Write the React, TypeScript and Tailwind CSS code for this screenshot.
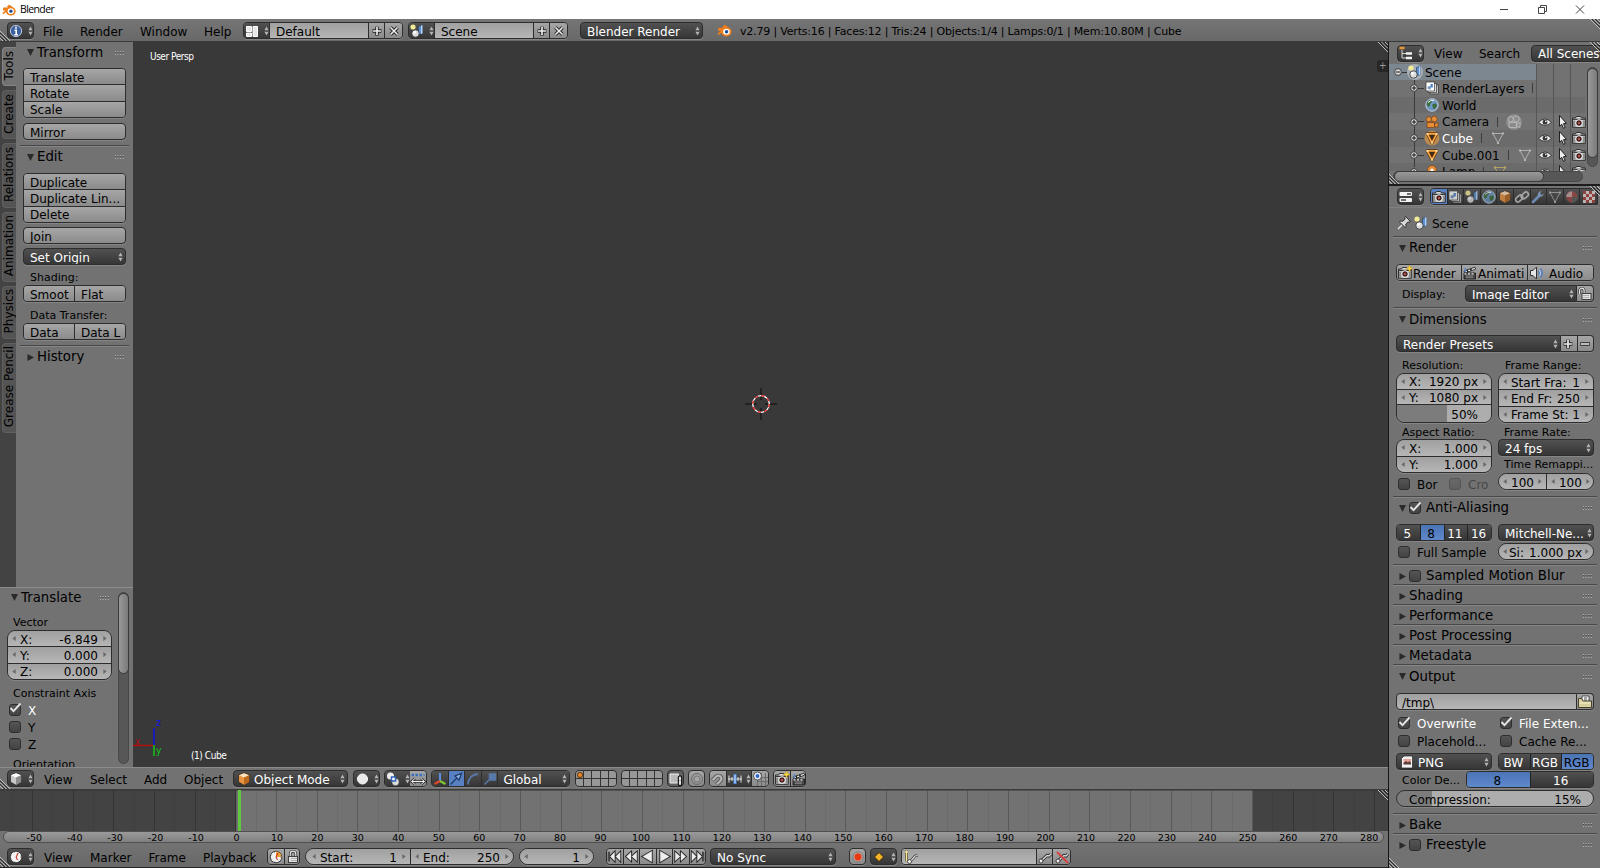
import type { ReactNode } from 'react';
import clsx from 'clsx';

const LIGHT = 'bg-linear-to-b from-[#a6a6a6] to-[#8b8b8b]';
const DARK = 'bg-linear-to-b from-[#515151] to-[#363636] text-white';
const FIELD = 'bg-linear-to-b from-[#a0a0a0] to-[#b6b6b6]';
const BOX = 'border border-[#2d2d2d] shadow-[0_1px_0_#858585]';

/* ---------- icons ---------- */

function Svg({ children, className = 'size-4' }: { children: ReactNode; className?: string }) {
  return (
    <svg viewBox="0 0 16 16" fill="none" className={clsx('shrink-0', className)}>
      {children}
    </svg>
  );
}

const BlenderLogo = ({ className = 'size-[14px]' }: { className?: string }) => (
  <Svg className={className}>
    <path d="M1 12.2 6.6 7.6H2.2V6h7L7 4.2 8.4 3l5.2 4.2" stroke="#ee7d1b" strokeWidth="2" strokeLinejoin="round" />
    <ellipse cx="10" cy="9.4" rx="5.6" ry="4.9" fill="#ee7d1b" />
    <ellipse cx="10.1" cy="9.3" rx="3.6" ry="3.2" fill="#fff" />
    <circle cx="10.2" cy="9.3" r="1.9" fill="#1f4f8f" />
  </Svg>
);

const Arrows = () => (
  <svg viewBox="0 0 6 12" className="h-3 w-[5px] shrink-0 fill-[#b4b4b4]">
    <path d="M3 .5 5.5 5h-5zM3 11.5.5 7h5z" />
  </svg>
);

const InfoIcon = () => (
  <Svg>
    <circle cx="8" cy="8" r="5.6" fill="#3b5f9c" stroke="#b9c9e2" />
    <path d="M8 3.800v2M6.500 7.200H8.200V11.500M6.300 11.700h3.600" stroke="#fff" strokeWidth="1.600" />
  </Svg>
);

const ScreenIcon = () => (
  <Svg>
    <path d="M2.500 3.500h5v5h-5zM2.500 10h5v3.500h-5zM9 3.500h4.500v10H9z" fill="#e6e6e6" stroke="#fff" />
  </Svg>
);

const SceneIcon = () => (
  <Svg>
    <circle cx="4" cy="4" r="2.600" fill="#f4eb98" />
    <path d="M9.500 3.500 13.500 2v8.500l-4 1z" fill="#5d8fd0" stroke="#23364f" strokeWidth=".6" />
    <path d="M12 2.500 13.500 2v8.500l-1.500.5z" fill="#b7d2f4" />
    <circle cx="6.500" cy="10.500" r="3.700" fill="#dcdcdc" stroke="#333" strokeWidth=".8" />
    <circle cx="5.500" cy="9.300" r="1.400" fill="#fff" />
  </Svg>
);

const CubeIcon = ({ color = 'white' }: { color?: 'white' | 'orange' }) => (
  <Svg>
    <path d="M8 1.800 13.500 4v7L8 14.200 2.500 11V4z" fill={color === 'orange' ? '#e79543' : '#c9c9c9'} stroke="#222" strokeWidth=".7" />
    <path d="M8 2.200 13 4.200 8 6.500 3 4.200z" fill={color === 'orange' ? '#ffe3bd' : '#fff'} />
    <path d="M8 6.500 13.200 4.300v6.600L8 13.800z" fill={color === 'orange' ? '#b96a20' : '#8c8c8c'} />
  </Svg>
);

const ClockIcon = ({ slice = false }: { slice?: boolean }) => (
  <Svg>
    <circle cx="8" cy="8" r="5.800" fill="#f2f2f2" stroke="#333" strokeWidth=".9" />
    {slice && <path d="M8 8V2.500A5.500 5.500 0 0 1 13.500 8z" fill="#f3a32c" />}
    <path d="M8 8.500 10 4M8 8l1.500 3" stroke="#c8372d" strokeWidth="1.100" />
    <circle cx="8" cy="8" r="4.800" stroke="#888" strokeWidth=".8" strokeDasharray="1 3" />
  </Svg>
);

const TreeIcon = () => (
  <Svg>
    <path d="M1.500 3h5" stroke="#e8923a" strokeWidth="2.600" />
    <path d="M4 5v8h4M4 8.500h4" stroke="#d8d8d8" />
    <path d="M8 8.500h6M8 13h6" stroke="#f2f2f2" strokeWidth="2.400" />
  </Svg>
);

const PropsIcon = () => (
  <Svg>
    <rect x="1.500" y="3" width="12.500" height="4" rx="1" fill="#f2f2f2" />
    <rect x="1.500" y="9" width="12.500" height="4" rx="1" fill="#f2f2f2" />
    <path d="M9 5h4M3 11h5" stroke="#444" strokeWidth="1.400" />
  </Svg>
);

const PhotoCam = ({ star = false }: { star?: boolean }) => (
  <Svg>
    <path d="M1.500 4h3l1-1.500h4l1 1.500h3.800v9.300H1.500z" fill="#dcdcdc" stroke="#222" strokeWidth=".9" />
    <path d="M2 5.300h12.300" stroke="#333" strokeWidth="1.200" />
    <path d="M2 6.500h2.500v6.300H2zM11.500 6.500H14v6.300h-2.500z" fill="#8c8c8c" />
    <circle cx="8" cy="9" r="3.300" fill="#3c2020" stroke="#fff" strokeWidth="1" />
    <circle cx="8" cy="9" r="1.200" fill="#c05248" />
    {star && <path d="m12.500 0 1 2.500L16 3.500l-2.500 1-1 2.500-1-2.500L9 3.500l2.500-1z" fill="#ffd93b" stroke="#c28d12" strokeWidth=".4" />}
  </Svg>
);

const Clapper = () => (
  <Svg>
    <path d="M2 8h11.500v6H2z" fill="#4a4a4a" stroke="#111" strokeWidth=".8" />
    <path d="m2 6 11-3.800.6 2L3 8z" fill="#eee" stroke="#111" strokeWidth=".8" />
    <path d="m5 5 1 1.800M8.500 3.800l1 1.800" stroke="#111" strokeWidth="1.400" />
    <path d="M2.500 8.800H13" stroke="#eee" strokeWidth="1.300" strokeDasharray="2 1.500" />
    <path d="M4 11h7M4 12.700h7" stroke="#aaa" strokeWidth=".6" />
    <path d="M3.300 3v4" stroke="#5a8bd0" strokeWidth="1.600" />
  </Svg>
);

const LayersIcon = () => (
  <Svg>
    <path d="M6 5h8.500v9H6z" fill="#bbb" stroke="#333" strokeWidth=".7" />
    <path d="M4 3.500h8.500v9H4z" fill="#ddd" stroke="#333" strokeWidth=".7" />
    <path d="M2 2h8.500v9H2z" fill="#fff" stroke="#333" strokeWidth=".7" />
    <path d="M6.500 4h2.300v3.500H6.500z" fill="#4a7fca" />
    <circle cx="5.300" cy="7.800" r="1.800" fill="#7799c4" />
  </Svg>
);

const WorldIcon = () => (
  <Svg>
    <circle cx="8" cy="8" r="6.200" fill="#6f97c4" stroke="#c5d3e2" strokeWidth="1" />
    <path d="M4 4c2-1.500 4-1 4 .5S5.500 6.500 6 8 4 10 3 8.500 3 5.500 4 4zM9 7c2-1 4-.5 4 1s-1.500 4-3 4-1-2-1.500-3 0-1.700.5-2z" fill="#3d6d3c" />
    <path d="M4 5.500q3-3 6-2" stroke="#e6eef8" strokeWidth="1" />
  </Svg>
);

const LinkIcon = () => (
  <Svg>
    <g stroke="#c4c4c4" strokeWidth="1.700">
      <rect x="1.200" y="7.200" width="8" height="4.600" rx="2.300" transform="rotate(-42 5.200 9.500)" />
      <rect x="6.800" y="4.200" width="8" height="4.600" rx="2.300" transform="rotate(-42 10.800 6.500)" />
    </g>
  </Svg>
);

const WrenchIcon = () => (
  <Svg>
    <path d="m3 13 6-6" stroke="#7fa4d8" strokeWidth="2.800" strokeLinecap="round" />
    <path d="M13.800 4.500 11.500 6 10 4.500 11.500 2.200A3.300 3.300 0 0 0 8 6.500 3.300 3.300 0 0 0 13.800 4.500z" fill="#8fb1e0" />
  </Svg>
);

const MeshTri = ({ color = '#b5b5b5' }: { color?: string }) => (
  <Svg>
    <path d="M3 3.500h10L8 13z" stroke={color} strokeWidth=".9" />
    <path d="M2 2.500h2v2H2zM12 2.500h2v2h-2zM7 12h2v2H7z" fill={color} />
  </Svg>
);

const ObjTri = ({ active = false }: { active?: boolean }) => (
  <Svg>
    {active && <circle cx="8" cy="8" r="7.500" fill="#b98b4f" />}
    <path d="M3.300 3.800h9.400L8 12.800z" fill="#3a2a18" stroke="#5c2f06" strokeWidth="3" strokeLinejoin="round" />
    <path d="M3.300 3.800h9.400L8 12.800z" stroke="#f6a849" strokeWidth="1.700" strokeLinejoin="round" />
    <path d="M2.500 3h2v2h-2zM11.500 3h2v2h-2zM7 11.500h2v2H7z" fill="#ffd9a0" />
  </Svg>
);

const MaterialIcon = () => (
  <Svg>
    <circle cx="8" cy="8" r="5.800" fill="#a04844" stroke="#555" strokeWidth=".7" />
    <path d="M8 2.200a5.800 5.800 0 0 0-5.800 5.800H8z" fill="#c9a5a2" />
    <path d="M8 8h5.800A5.800 5.800 0 0 1 8 13.800z" fill="#5c5c5c" />
  </Svg>
);

const TextureIcon = () => (
  <Svg>
    <rect x="2" y="2" width="12" height="12" fill="#e8dada" />
    {[0, 1, 2, 3].map((r) =>
      [0, 1].map((c) => <rect key={`${r}${c}`} x={2 + c * 6 + (r % 2) * 3} y={2 + r * 3} width="3" height="3" fill="#a8433c" />)
    )}
  </Svg>
);

const VideoCam = ({ dim = false }: { dim?: boolean }) => (
  <Svg>
    {dim && <circle cx="8" cy="8" r="7.300" fill="#8c8c8c" stroke="#a5a5a5" strokeWidth=".6" />}
    <g fill={dim ? '#8c8c8c' : '#e58d3a'} stroke={dim ? '#c6c6c6' : '#7c3f08'} strokeWidth=".7">
      <path d="M3 8.500h7.500v5H3zM10.500 10l3.500-1.500v5L10.500 12z" />
      <circle cx="4.800" cy="5.300" r="2.600" />
      <circle cx="10.300" cy="5" r="2.900" />
    </g>
  </Svg>
);

const LampIcon = () => (
  <Svg>
    <circle cx="8" cy="6" r="4.500" fill="#e58d3a" stroke="#7c3f08" strokeWidth=".7" />
    <circle cx="8" cy="6" r="1.500" fill="#fff" />
  </Svg>
);

const EyeIcon = () => (
  <Svg>
    <path d="M1.500 8.500Q8 1.500 14.500 8.500 8 14 1.500 8.500z" fill="#eee" stroke="#222" strokeWidth=".8" />
    <circle cx="8" cy="8.200" r="2.400" fill="#333" />
    <circle cx="8.800" cy="7.400" r=".8" fill="#fff" />
  </Svg>
);

const PointerIcon = () => (
  <Svg>
    <path d="M5.500 1.500v10.800l2.200-2 1.800 4 1.700-.8-1.800-3.800 2.900-.4z" fill="#eee" stroke="#111" strokeWidth=".9" />
  </Svg>
);

const PinIcon = () => (
  <Svg>
    <path d="m2 14 4.500-4.500" stroke="#e9e9e9" strokeWidth="1.300" />
    <path d="m9.500 1.500 5 5-1.500.7-1-.3L9.800 9l.3 2.800-1 .7L3.500 7l.8-1 2.700.2L9.200 4l-.4-1.200z" fill="#d9d9d9" stroke="#222" strokeWidth=".9" />
  </Svg>
);

const SpeakerIcon = () => (
  <Svg>
    <path d="M1.500 5.500H4L7.500 2v12L4 10.500H1.500z" fill="#e6e6e6" stroke="#222" strokeWidth=".9" />
    <path d="M9.500 5.500q2 2.500 0 5M11.500 3.500q3.500 4.500 0 9" stroke="#4d7cc4" strokeWidth="1.400" />
    <path d="M10.500 5q2 3 0 6" stroke="#dce8fa" strokeWidth=".7" />
  </Svg>
);

const LockIcon = ({ open = false }: { open?: boolean }) => (
  <Svg>
    <path d={open ? 'M2.500 8V4.500a2.300 2.300 0 0 1 4.600 0V7' : 'M5.200 8V5a2.800 2.800 0 0 1 5.600 0v3'} stroke="#333" strokeWidth="2.600" />
    <path d={open ? 'M2.500 8V4.500a2.300 2.300 0 0 1 4.600 0V7' : 'M5.200 8V5a2.800 2.800 0 0 1 5.600 0v3'} stroke="#e6e6e6" strokeWidth="1.200" />
    <rect x={open ? 5 : 3.5} y="7.500" width="9" height="6" fill="#e2e2e2" stroke="#333" strokeWidth=".9" />
    <path d="M6 9.500h6M6 11.500h6" stroke="#999" strokeWidth=".7" />
  </Svg>
);

const FolderIcon = () => (
  <Svg>
    <path d="M5 2h7v7H5z" fill="#f5f5f5" stroke="#333" strokeWidth=".8" />
    <path d="M7 4h3M7 6h3" stroke="#555" />
    <path d="M1.500 4.500h3L6 7h8.500v6.500h-13z" fill="#d9cfa0" stroke="#3a3520" strokeWidth=".9" />
    <path d="M2.500 9h11" stroke="#f7f1cd" />
  </Svg>
);

const ImageIcon = () => (
  <Svg>
    <path d="M2.500 4.500 5 2h8.500v12h-11z" fill="#f2f2f2" stroke="#222" strokeWidth=".7" />
    <path d="M4.500 5h7.500v5H4.500z" fill="#e3a29a" />
    <path d="m4.500 9 2.500-2 2 1.500L10.500 7 12 9v1.500H4.500z" fill="#5a3a3a" />
  </Svg>
);

const Plus = () => (
  <Svg className="size-[14px]">
    <path d="M8 3v10M3 8h10" stroke="#222" strokeWidth="4" />
    <path d="M8 3.500v9M3.500 8h9" stroke="#eee" strokeWidth="1.900" />
  </Svg>
);

const Minus = () => (
  <Svg className="size-[14px]">
    <path d="M2.500 8h11" stroke="#222" strokeWidth="4" />
    <path d="M3.200 8h9.600" stroke="#eee" strokeWidth="1.900" />
  </Svg>
);

const Cross = () => (
  <Svg className="size-[14px]">
    <path d="m4 4 8 8M12 4l-8 8" stroke="#222" strokeWidth="3.800" />
    <path d="m4 4 8 8M12 4l-8 8" stroke="#eee" strokeWidth="1.800" />
  </Svg>
);

/* diagonal grip drawn in area corners */
const Grip = ({ className }: { className: string }) => (
  <svg viewBox="0 0 10 10" className={clsx('absolute size-[10px]', className)}>
    <path d="M0 0 10 10M3.500 0 10 6.500M7 0l3 3" stroke="#c2c2c2" strokeWidth="1" />
    <path d="M1.700 0 10 8.300M5.200 0 10 4.800" stroke="#1c1c1c" strokeWidth="1" />
  </svg>
);

/* same grip for bottom-left corners, where the lines fill the other triangle */
const GripLow = () => (
  <svg viewBox="0 0 10 10" className="absolute bottom-0 left-0 size-[10px]">
    <path d="M0 0 10 10M0 3.500 6.500 10M0 7l3 3" stroke="#c2c2c2" strokeWidth="1" />
    <path d="M0 1.700 8.300 10M0 5.200 4.800 10" stroke="#1c1c1c" strokeWidth="1" />
  </svg>
);

/* ---------- widgets ---------- */

const Editor = ({ children, className = 'ml-[7px]' }: { children: ReactNode; className?: string }) => (
  <div className={clsx('flex h-[17px] w-[27px] shrink-0 items-center justify-center gap-1 rounded-[4px]', DARK, BOX, className)}>
    {children}
    <Arrows />
  </div>
);

const Btn = ({ children, className }: { children: ReactNode; className?: string }) => (
  <div className={clsx('flex h-[17px] items-center overflow-hidden rounded-[4px] pt-[2px] pl-[6px] whitespace-nowrap', LIGHT, BOX, className)}>
    {children}
  </div>
);

const Split = ({ labels, className }: { labels: string[]; className?: string }) => (
  <div className={clsx('flex h-[17px] divide-x divide-[#2d2d2d] overflow-hidden rounded-[4px]', BOX, className)}>
    {labels.map((label) => (
      <div key={label} className={clsx('flex flex-1 items-center pt-[2px] pl-[6px]', LIGHT)}>{label}</div>
    ))}
  </div>
);

const Stack = ({ labels }: { labels: string[] }) => (
  <div className={clsx('flex h-[50px] flex-col divide-y divide-[#2d2d2d] overflow-hidden rounded-[4px]', BOX)}>
    {labels.map((label) => (
      <div key={label} className={clsx('flex flex-1 items-center pt-[2px] pl-[6px] whitespace-nowrap', LIGHT)}>{label}</div>
    ))}
  </div>
);

const Select = ({ children, className }: { children: ReactNode; className?: string }) => (
  <div className={clsx('flex h-[17px] shrink-0 items-center justify-between overflow-hidden rounded-[4px] pr-[2px] pl-[6px] whitespace-nowrap', DARK, BOX, className)}>
    <span className="flex items-center gap-1 pt-[2px]">{children}</span>
    <Arrows />
  </div>
);

const Tri = ({ left = false }: { left?: boolean }) => (
  <svg viewBox="0 0 4 6" className="h-[5px] w-1 shrink-0 fill-[#6a6a6a]">
    <path d={left ? 'M4 0v6L0 3z' : 'M0 0v6l4-3z'} />
  </svg>
);

/* one line of a number field; the caller draws the border */
const Num = ({ label, value, className }: { label?: string; value: string; className?: string }) => (
  <div className={clsx('flex flex-1 items-center px-[4px] whitespace-nowrap', FIELD, className)}>
    <Tri left />
    <span className="pt-[2px] pl-[4px]">{label}</span>
    <span className="ml-auto pt-[2px] pr-[5px]">{value}</span>
    <Tri />
  </div>
);

const NumStack = ({ children, className }: { children: ReactNode; className?: string }) => (
  <div className={clsx('flex flex-col divide-y divide-[#2d2d2d] overflow-hidden rounded-[8px]', BOX, className)}>{children}</div>
);

const Box = ({ on = false, dim = false }: { on?: boolean; dim?: boolean }) => (
  <span className={clsx('flex size-3 shrink-0 items-center justify-center rounded-[3px] border bg-linear-to-b', dim ? 'border-[#555] from-[#696969] to-[#5f5f5f]' : 'border-[#2d2d2d] from-[#555] to-[#434343]')}>
    {on && (
      <svg viewBox="0 0 12 12" className="-mt-[3px] size-3 shrink-0 overflow-visible" fill="none">
        <path d="m1.500 6 3 3.200L11.500 1.500" stroke="#e4e4e4" strokeWidth="1.900" />
      </svg>
    )}
  </span>
);

const Check = ({ label, on, dim, className }: { label: string; on?: boolean; dim?: boolean; className?: string }) => (
  <div className={clsx('flex items-center gap-[7px] whitespace-nowrap', on && 'text-white', dim && 'text-[#474747]', className)}>
    <Box on={on} dim={dim} />
    <span className="pt-[2px]">{label}</span>
  </div>
);

const Dots = () => (
  <svg viewBox="0 0 10 4" className="ml-auto h-1 w-[10px] shrink-0">
    {[0, 1, 2, 3].map((i) => (
      <g key={i}>
        <path d={`M${i * 2.6} 0h1v1h-1zM${i * 2.6} 3h1v1h-1z`} fill="#b5b5b5" />
        <path d={`M${i * 2.6} 1h1v1h-1z`} fill="#4c4c4c" />
      </g>
    ))}
  </svg>
);

const Title = ({ label, closed = false, check, className = 'h-5' }: { label: string; closed?: boolean; check?: 'on' | 'off'; className?: string }) => (
  <div className={clsx('flex items-center text-[13.300px] whitespace-nowrap', className)}>
    <svg viewBox="0 0 8 8" className="size-[7px] shrink-0 fill-[#2a2a2a]">
      <path d={closed ? 'M.5 0 8 4 .5 8z' : 'M0 0h8L4 8z'} />
    </svg>
    {check && <span className="ml-[3px]"><Box on={check === 'on'} /></span>}
    <span className={check ? 'pl-[5px]' : 'pl-[3px]'}>{label}</span>
    <Dots />
  </div>
);

const Rule = () => <div className="-mx-[3px] h-[2px] shrink-0 border-t border-[#484848] bg-[#868686]" />;

const IconCell = ({ children, tone = LIGHT, className = 'w-[16.600px]' }: { children: ReactNode; tone?: string; className?: string }) => (
  <div className={clsx('flex items-center justify-center', tone, className)}>{children}</div>
);

/* ---------- areas ---------- */

function InfoHeader() {
  return (
    <div className="relative flex h-[23px] shrink-0 items-center border-b border-[#3a3a3a] bg-linear-to-b from-[#757575] to-[#686868] pt-px">
      <GripLow />
      <Editor><InfoIcon /></Editor>
      <span className="ml-[9px] w-[37px] pt-[3px]">File</span>
      <span className="w-[60px] pt-[3px]">Render</span>
      <span className="w-[64px] pt-[3px]">Window</span>
      <span className="w-[39px] pt-[3px]">Help</span>
      {[{ name: 'Default', icon: <ScreenIcon /> }, { name: 'Scene', icon: <SceneIcon /> }].map(({ name, icon }) => (
        <div key={name} className={clsx('mr-[5px] flex h-[17px] w-[160px] divide-x divide-[#2d2d2d] overflow-hidden rounded-[4px]', BOX)}>
          <div className={clsx('flex w-[26px] items-center justify-center gap-1', DARK)}>{icon}<Arrows /></div>
          <div className={clsx('flex-1 pt-[2px] pl-[6px] leading-[15px]', FIELD)}>{name}</div>
          <IconCell><Plus /></IconCell>
          <IconCell><Cross /></IconCell>
        </div>
      ))}
      <Select className="ml-[7px] w-[123px]">Blender Render</Select>
      <BlenderLogo className="ml-[14px] size-[15px]" />
      <span className="pt-[2px] pl-[8px] text-[11px] tracking-[-0.185px]">v2.79 | Verts:16 | Faces:12 | Tris:24 | Objects:1/4 | Lamps:0/1 | Mem:10.80M | Cube</span>
      <Grip className="top-0 right-0" />
    </div>
  );
}

const TABS = [
  { label: 'Tools', size: 'h-[39px]', active: true },
  { label: 'Create', size: 'h-[49px]' },
  { label: 'Relations', size: 'h-[65px]' },
  { label: 'Animation', size: 'h-[70px]' },
  { label: 'Physics', size: 'h-[53px]' },
  { label: 'Grease Pencil', size: 'h-[90px]' },
];

function ToolShelf() {
  return (
    <div className="flex h-[545px] shrink-0">
      <div className="flex w-4 flex-col gap-1 bg-[#434343] pt-[5px] pl-[2px]">
        {TABS.map(({ label, size, active }) => (
          <div key={label} className={clsx('flex items-center justify-center rounded-l-[4px] border border-r-0 pr-[2px] pb-[2px]', size, active ? 'border-[#858585] bg-[#727272]' : 'border-[#606060] bg-[#545454]')}>
            <span className="rotate-180 whitespace-nowrap [writing-mode:vertical-rl]">{label}</span>
          </div>
        ))}
      </div>
      <div className="flex-1 pr-[7px] pl-[7px]">
        <Title label="Transform" className="h-[26px] pr-[1px] pb-[5px] pl-1" />
        <Stack labels={['Translate', 'Rotate', 'Scale']} />
        <Btn className="mt-[5px] mb-[5px]">Mirror</Btn>
        <Rule />
        <Title label="Edit" className="h-[26px] pr-[1px] pb-[6px] pl-1" />
        <Stack labels={['Duplicate', 'Duplicate Lin...', 'Delete']} />
        <Btn className="mt-1">Join</Btn>
        <Select className="mt-1">Set Origin</Select>
        <div className="h-5 pt-[5px] pl-[7px] text-[11px] leading-4">Shading:</div>
        <Split labels={['Smoot', 'Flat']} />
        <div className="h-[21px] pt-[6px] pl-[7px] text-[11px] leading-4">Data Transfer:</div>
        <Split labels={['Data', 'Data L']} className="mb-[5px]" />
        <Rule />
        <Title label="History" closed className="h-[20px] pr-[1px] pl-1" />
      </div>
    </div>
  );
}

function OperatorPanel() {
  return (
    <div className="flex min-h-0 flex-1 overflow-hidden border-t border-[#8b8b8b] pr-1 pl-[7px]">
      <div className="w-[105px]">
        <Title label="Translate" className="h-5 pr-[2px] pb-px pl-1" />
        <div className="h-[22px] pt-[8px] pl-[6px] text-[11px] leading-[14px]">Vector</div>
        <NumStack className="h-[50px]">
          <Num label="X:" value="-6.849" />
          <Num label="Y:" value="0.000" />
          <Num label="Z:" value="0.000" />
        </NumStack>
        <div className="h-[21px] pt-[7px] pl-[6px] text-[11px] leading-[14px]">Constraint Axis</div>
        <Check label="X" on className="h-[17px] pl-[2px]" />
        <Check label="Y" className="h-[17px] pl-[2px]" />
        <Check label="Z" className="h-[17px] pl-[2px]" />
        <div className="h-[18px] pt-[6px] pl-[6px] text-[11px] leading-[14px]">Orientation</div>
      </div>
      <div className="mt-1 mb-[3px] ml-auto w-[11px] rounded-full border border-[#484848] bg-[#575757]">
        <div className="-mx-px h-[81px] rounded-full border border-[#3a3a3a] bg-linear-to-r from-[#999] to-[#7b7b7b]" />
      </div>
    </div>
  );
}

function Viewport() {
  return (
    <div className="relative flex-1 bg-[#393939] font-['DejaVu_Sans_Condensed','DejaVu_Sans',sans-serif] text-[10px] tracking-[-0.45px] text-white">
      <span className="absolute top-[10px] left-[17px]">User Persp</span>
      <span className="absolute bottom-[6px] left-[58px]">(1) Cube</span>
      <svg viewBox="0 0 34 34" className="absolute top-[345px] left-[611px] size-[34px]" fill="none">
        <path d="M17 1v12M17 21v12M1 17h12M21 17h12" stroke="#0c0c0c" />
        <circle cx="17" cy="17" r="8.300" stroke="#fff" strokeWidth="1.300" />
        <circle cx="17" cy="17" r="8.300" stroke="#e51c1c" strokeWidth="1.300" strokeDasharray="3.260" />
      </svg>
      <svg viewBox="0 0 40 50" className="absolute bottom-0 left-0 h-[50px] w-10 text-[10px]">
        <path d="M0 28.500h21" stroke="#b01010" strokeWidth="1.500" />
        <path d="M21 11v17" stroke="#1212e6" strokeWidth="1.500" />
        <path d="M21 28v11" stroke="#12c812" strokeWidth="1.500" />
        <text x="2" y="28" fill="#b01010">x</text>
        <text x="23" y="9" fill="#1212e6">z</text>
        <text x="23" y="37" fill="#12c812">y</text>
      </svg>
      <Grip className="top-0 right-0" />
      <span className="absolute top-[18px] right-0 flex h-3 w-[11px] items-center justify-center rounded-l-[3px] bg-[#262626] text-[#999]">+</span>
    </div>
  );
}

const LayerGrid = ({ dot = false, className }: { dot?: boolean; className: string }) => (
  <div className={clsx('grid h-[17px] w-[42px] grid-cols-5 grid-rows-2 gap-px overflow-hidden rounded-[4px] bg-[#333]', BOX, className)}>
    {Array.from({ length: 10 }, (_, i) => (
      <div key={i} className="flex items-center justify-center bg-[#979797]">
        {dot && i === 0 && <span className="size-1 rounded-full bg-[#e8892c] ring-1 ring-[#6d3c0a]" />}
      </div>
    ))}
  </div>
);

function ViewHeader() {
  return (
    <div className="relative flex h-[23px] shrink-0 items-center border-y border-t-[#8b8b8b] border-b-[#3a3a3a] bg-[#727272]">
      <GripLow />
      <Editor><CubeIcon /></Editor>
      <span className="ml-[10px] w-[46px] pt-[3px]">View</span>
      <span className="w-[54px] pt-[3px]">Select</span>
      <span className="w-[40px] pt-[3px]">Add</span>
      <span className="w-[49px] pt-[3px]">Object</span>
      <Select className="w-[115px] !pl-[2px]"><span className="-mt-[2px] -mr-[2px]"><CubeIcon color="orange" /></span>Object Mode</Select>
      <Editor className="ml-[5px]">
        <Svg><circle cx="8.500" cy="8" r="5" fill="#e9e9e9" stroke="#fff" /></Svg>
      </Editor>
      <div className={clsx('ml-1 flex h-[17px] w-[43px] overflow-hidden rounded-[4px]', BOX)}>
        <div className={clsx('flex flex-1 items-center justify-center gap-1', DARK)}>
          <Svg>
            <circle cx="5.500" cy="5" r="3.500" fill="#eee" />
            <circle cx="10.500" cy="11" r="3.700" fill="#ddd" stroke="#333" strokeWidth=".6" />
            <rect x="6.500" y="6" width="4" height="4" fill="#fff" stroke="#2f62b8" strokeWidth="1.500" />
          </Svg>
          <Arrows />
        </div>
        <IconCell>
          <Svg>
            <path d="M1.500 4h13" stroke="#3a70c0" strokeWidth="2.500" strokeDasharray="2.500 1.500" />
            <path d="M2 10.500h12M5 7.500l-3.500 3L5 13.500M11 7.500l3.500 3-3.500 3" stroke="#333" strokeWidth="2.400" />
            <path d="M2 10.500h12M5 7.500l-3.500 3L5 13.500M11 7.500l3.500 3-3.500 3" stroke="#eee" />
          </Svg>
        </IconCell>
      </div>
      <div className={clsx('ml-1 flex h-[17px] w-[139px] divide-x divide-[#2d2d2d] overflow-hidden rounded-[4px]', BOX)}>
        <IconCell tone={DARK}>
          <Svg>
            <path d="M8 10V2" stroke="#5b8fe0" strokeWidth="2" />
            <path d="m8 10-5.500 3" stroke="#e0452c" strokeWidth="2.200" />
            <path d="m8 10 5.500 3" stroke="#7ec832" strokeWidth="2.200" />
          </Svg>
        </IconCell>
        <IconCell tone="bg-[#5680c2]">
          <Svg><path d="M2.500 13.500 9 7 7 5l6.500-2.500L11 9 9.500 7.500" fill="#8db4ee" stroke="#1f3a66" strokeWidth="1.300" /></Svg>
        </IconCell>
        <IconCell tone={DARK}>
          <Svg><path d="M3 13.500Q3.500 4 13 3" stroke="#5878a8" strokeWidth="1.800" /></Svg>
        </IconCell>
        <IconCell tone={DARK}>
          <Svg><path d="m2.500 13.500 6-6M7.500 3h6v6h-6z" fill="#5878a8" stroke="#5878a8" strokeWidth="1.500" /></Svg>
        </IconCell>
        <div className={clsx('flex flex-1 items-center justify-between pr-[2px] pl-[5px]', DARK)}>
          <span className="pt-[2px]">Global</span>
          <Arrows />
        </div>
      </div>
      <LayerGrid dot className="ml-[5px]" />
      <LayerGrid className="ml-1" />
      <div className={clsx('ml-1 flex h-[17px] w-[17px] items-center justify-center rounded-[4px] bg-[#626262]', BOX)}>
        <Svg>
          <path d="M2 3h8.500v9H2z" fill="#b9b9b9" stroke="#eee" />
          <path d="M12 6.500v3M12 10.500v2.500" stroke="#111" strokeWidth="4.500" strokeLinecap="round" />
          <path d="M12 6.500v2.500M12 10.500v2.500" stroke="#ddd" strokeWidth="2.200" strokeLinecap="round" />
        </Svg>
      </div>
      <div className={clsx('ml-1 flex h-[17px] w-[17px] items-center justify-center rounded-[4px]', LIGHT, BOX)}>
        <Svg>
          <circle cx="8" cy="8" r="5.500" stroke="#6c6c6c" />
          <circle cx="8" cy="8" r="3" fill="#a5a5a5" stroke="#777" />
        </Svg>
      </div>
      <div className={clsx('ml-1 flex h-[17px] w-[60px] divide-x divide-[#2d2d2d] overflow-hidden rounded-[4px]', BOX)}>
        <IconCell>
          <Svg>
            <g transform="rotate(45 8 8)">
              <path d="M5 13V7.500a3 3 0 0 1 6 0V13" stroke="#555" strokeWidth="4" />
              <path d="M5 12.500V7.500a3 3 0 0 1 6 0v5" stroke="#b4b4b4" strokeWidth="2.400" />
            </g>
          </Svg>
        </IconCell>
        <div className={clsx('flex flex-1 items-center justify-center gap-[3px]', DARK)}>
          <Svg>
            <path d="M1 8h14M2 4.500v7M5 6v4M11 6v4M14 4.500v7" stroke="#e5e5e5" />
            <path d="M8 3v10" stroke="#4f8be6" strokeWidth="3" />
            <path d="M8 4v8" stroke="#d8e7ff" />
          </Svg>
          <Arrows />
        </div>
        <IconCell>
          <Svg>
            <path d="M9 6.500h7M5 10.500h11M9.500 2v13M13.500 2v13M5.500 9v6" stroke="#666" strokeWidth=".9" />
            <circle cx="5.500" cy="5" r="4" fill="#e8eefb" stroke="#333" strokeWidth=".8" />
            <circle cx="5.500" cy="5" r="1.900" fill="#2f68c4" />
          </Svg>
        </IconCell>
      </div>
      <div className={clsx('ml-1 flex h-[17px] w-[33px] divide-x divide-[#2d2d2d] overflow-hidden rounded-[4px]', BOX)}>
        <IconCell className="flex-1"><PhotoCam star /></IconCell>
        <IconCell className="flex-1"><Clapper /></IconCell>
      </div>
    </div>
  );
}

const FRAMES = Array.from({ length: 34 }, (_, i) => -50 + i * 10);
const ZERO = 236.3;
const STEP = 40.67;

function Timeline() {
  return (
    <div className="relative shrink-0 bg-[#727272]">
      <svg viewBox="0 0 1388 41" className="block h-[41px] w-full">
        <rect width="1388" height="41" fill="#727272" />
        <rect width={ZERO} height="41" fill="#434343" />
        <rect x="1253" width="135" height="41" fill="#434343" />
        {Array.from({ length: 69 }, (_, i) => i - 11).map((n) => (
          <path key={n} d={`M${Math.round(ZERO + (n * STEP) / 2) - 0.5} 0v41`} stroke="#000" strokeOpacity={n % 2 ? 0.06 : 0.22} />
        ))}
        <path d="M0 .5h1388" stroke="#333" strokeOpacity=".5" />
        <path d="M239.500 0v41" stroke="#5fc840" strokeWidth="3" />
      </svg>
      <Grip className="top-0 right-0" />
      <div className="flex h-[15px] items-start pl-[3px]">
        <div className="flex h-[12px] w-[1381px] items-center rounded-full border border-[#505050] bg-linear-to-b from-[#9a9a9a] to-[#808080] pt-px pl-[10px] text-[9.500px] leading-[9px]">
          {FRAMES.map((f) => <span key={f} className="w-[40.460px] shrink-0 text-center">{f}</span>)}
        </div>
      </div>
    </div>
  );
}

const TRANSPORT = [
  'M2 3v10M8 3.500 3.500 8 8 12.500zM14 3.500 9.500 8l4.500 4.500z',
  'M7.500 3.500 2.500 8l5 4.500zM13.500 3.500 8.500 8l5 4.500z',
  'M12.500 2.500 3 8l9.500 5.500z',
  'M3.500 2.500 13 8l-9.500 5.500z',
  'M2.500 3.500 7.500 8l-5 4.500zM8.500 3.500 13.500 8l-5 4.500z',
  'M2 3.500 6.500 8 2 12.500zM8 3.500 12.500 8 8 12.500zM14 3v10',
];

const KeyIcon = ({ cross = false }: { cross?: boolean }) => (
  <Svg>
    <path d="m3.500 12.500 6.500-6 2 .5 2-2" stroke="#222" strokeWidth="3" />
    <path d="m3.500 12.500 6.500-6 2 .5 2-2" stroke="#ddd" strokeWidth="1.400" />
    <circle cx="4" cy="12" r="2" fill="#eee" stroke="#222" strokeWidth=".8" />
    {cross && <path d="m3 3 11 11" stroke="#d8403c" strokeWidth="1.800" />}
  </Svg>
);

function TimelineHeader() {
  return (
    <div className="relative flex h-[22px] shrink-0 items-center border-b border-[#222] bg-linear-to-b from-[#727272] to-[#686868]">
      <GripLow />
      <Editor><ClockIcon /></Editor>
      <span className="ml-[10px] w-[46px] pt-[3px]">View</span>
      <span className="w-[58.500px] pt-[3px]">Marker</span>
      <span className="w-[54.500px] pt-[3px]">Frame</span>
      <span className="w-[64px] pt-[3px]">Playback</span>
      <div className={clsx('flex h-[17px] w-[33px] divide-x divide-[#2d2d2d] overflow-hidden rounded-[4px]', BOX)}>
        <IconCell className="flex-1"><ClockIcon slice /></IconCell>
        <IconCell className="flex-1"><LockIcon /></IconCell>
      </div>
      <div className={clsx('ml-[5px] flex h-[17px] w-[209px] divide-x divide-[#2d2d2d] overflow-hidden rounded-full', BOX)}>
        <Num label="Start:" value="1" className="pl-[6px]" />
        <Num label="End:" value="250" />
      </div>
      <div className={clsx('ml-[5px] flex h-[17px] w-[75px] overflow-hidden rounded-full', BOX)}>
        <Num value="1" />
      </div>
      <div className={clsx('ml-3 flex h-[17px] w-[100px] divide-x divide-[#2d2d2d] overflow-hidden rounded-[4px]', BOX)}>
        {TRANSPORT.map((d) => (
          <IconCell key={d} className="flex-1">
            <Svg className="size-[15px]">
              <path d={d} fill="#eee" stroke="#1c1c1c" strokeWidth="2.200" />
              <path d={d} fill="#eee" stroke="#eee" strokeWidth=".4" />
            </Svg>
          </IconCell>
        ))}
      </div>
      <Select className="ml-[4px] w-[126px]">No Sync</Select>
      <div className={clsx('ml-[13px] flex h-[17px] w-[17px] items-center justify-center rounded-[4px]', LIGHT, BOX)}>
        <Svg>
          <circle cx="8" cy="8" r="5" fill="#c9c9c9" stroke="#666" strokeWidth=".8" />
          <circle cx="8" cy="8" r="3.700" fill="#e63b12" />
        </Svg>
      </div>
      <Editor className="ml-1">
        <Svg><path d="M8 3.500 12.500 8 8 12.500 3.500 8z" fill="#f7b32a" stroke="#2b1c00" strokeWidth=".8" /></Svg>
      </Editor>
      <div className={clsx('ml-1 flex h-[17px] w-[170px] divide-x divide-[#2d2d2d] overflow-hidden rounded-[4px]', BOX)}>
        <div className={clsx('flex flex-1 items-center pl-px', FIELD)}>
          <Svg>
            <path d="M3.500 1.500v11M2 3h3" stroke="#4a4320" strokeWidth="2.600" />
            <path d="M3.500 1.500v11M2 3h3" stroke="#f1e6a0" strokeWidth="1.400" />
            <path d="m7 13 5-6 2.500-.5" stroke="#333" strokeWidth="2.600" />
            <path d="m7 13 5-6 2.500-.5" stroke="#ddd" strokeWidth="1.200" />
            <circle cx="6.500" cy="12.500" r="2" fill="#eee" stroke="#333" strokeWidth=".8" />
          </Svg>
        </div>
        <IconCell><KeyIcon /></IconCell>
        <IconCell><KeyIcon cross /></IconCell>
      </div>
    </div>
  );
}

const Expander = ({ minus = false }: { minus?: boolean }) => (
  <svg viewBox="0 0 8 8" className="size-2 shrink-0" fill="none">
    <circle cx="4" cy="4" r="3.300" fill="#ddd" stroke="#222" strokeWidth=".8" />
    <path d={minus ? 'M2 4h4' : 'M2 4h4M4 2v4'} stroke="#111" />
  </svg>
);

type Item = { name: string; icon: ReactNode; data?: ReactNode; bar?: boolean; toggles?: boolean; leaf?: boolean; selected?: boolean };

const ITEMS: Item[] = [
  { name: 'RenderLayers', icon: <LayersIcon />, bar: true },
  { name: 'World', icon: <WorldIcon />, leaf: true },
  { name: 'Camera', icon: <VideoCam />, data: <VideoCam dim />, bar: true, toggles: true },
  { name: 'Cube', icon: <ObjTri active />, data: <MeshTri />, bar: true, toggles: true, selected: true },
  { name: 'Cube.001', icon: <ObjTri />, data: <MeshTri />, bar: true, toggles: true },
  { name: 'Lamp', icon: <LampIcon />, data: <MeshTri color="#b8a860" />, bar: true, toggles: true },
];

function Outliner() {
  return (
    <div className="relative flex h-[144px] shrink-0 flex-col overflow-hidden border-b-2 border-[#1c1c1c] bg-[#727272]">
      <div className="flex h-[22px] shrink-0 items-center">
        <Editor className="ml-2"><TreeIcon /></Editor>
        <span className="ml-[10px] w-[45px] shrink-0 pt-[2px]">View</span>
        <span className="w-[52px] shrink-0 pt-[2px]">Search</span>
        <Select className="w-[90px]">All Scenes</Select>
      </div>
      <div className="flex h-[107px] shrink-0 overflow-hidden">
        <div className="relative w-[196px]">
          <div className="flex h-4 items-center">
            <div className="flex h-4 w-[148px] items-center bg-[#7d8790] pl-[5px]">
              <Expander minus />
              <span className="w-[5px] border-t border-[#333]" />
              <span className="mr-[2px] flex rounded-full bg-[#a8aeb5]"><SceneIcon /></span>
              <span className="pt-[1px]">Scene</span>
            </div>
          </div>
          {ITEMS.map(({ name, icon, data, bar, toggles, leaf, selected }, i) => (
            <div key={name} className={clsx('flex h-[16.700px] items-center', i % 2 ? 'bg-[#6b6b6b]' : 'bg-[#727272]')}>
              <div className="flex w-[148px] shrink-0 items-center overflow-hidden pl-[21px] whitespace-nowrap">
                <span className="flex w-2 shrink-0">{!leaf && <Expander />}</span>
                <span className={clsx('w-[6px] shrink-0 border-t', leaf ? 'border-transparent' : 'border-[#3a3a3a]')} />
                {icon}
                <span className={clsx('pt-[1px] pl-[2px]', selected && 'text-white')}>{name}</span>
                {bar && <span className="mx-[8px] h-2.5 w-px shrink-0 bg-[#3d3d3d]" />}
                {data}
              </div>
              {toggles && <div className="flex gap-px"><EyeIcon /><PointerIcon /><PhotoCam /></div>}
            </div>
          ))}
          {/* column dividers and the tree line run across every row */}
          <svg viewBox="0 0 196 107" className="absolute inset-0 h-[107px] w-[196px]">
            <path d="M147.500 0v107M164.500 0v107M181.500 0v107" stroke="#565656" />
            <path d="M25.500 16v4M25.500 28v26M25.500 62v8M25.500 78v9M25.500 95v8" stroke="#3a3a3a" />
          </svg>
        </div>
        <div className="mt-[3px] ml-[2px] h-[100px] w-[11px] rounded-full border border-[#484848] bg-[#575757]">
          <div className="-mx-px h-[90px] rounded-full border border-[#3a3a3a] bg-linear-to-r from-[#999] to-[#7b7b7b]" />
        </div>
      </div>
      <div className="ml-[4px] h-[11px] w-[190px] shrink-0 rounded-full border border-[#484848] bg-[#575757]">
        <div className="-my-px h-[11px] w-[150px] rounded-full border border-[#3a3a3a] bg-linear-to-b from-[#999] to-[#7b7b7b]" />
      </div>
      <Grip className="top-0 right-0" />
      <GripLow />
    </div>
  );
}

const PROP_TABS = [
  <PhotoCam />, <LayersIcon />, <SceneIcon />, <WorldIcon />, <CubeIcon color="orange" />,
  <LinkIcon />, <WrenchIcon />, <MeshTri />, <MaterialIcon />, <TextureIcon />,
];

const Choice = ({ options, active, className }: { options: string[]; active: number; className?: string }) => (
  <div className={clsx('flex h-[17px] divide-x divide-[#222] overflow-hidden rounded-[4px]', BOX, className)}>
    {options.map((o, i) => (
      <div key={i} className={clsx('flex flex-1 items-center justify-center pt-[2px] pr-[2px]', i === active ? 'bg-linear-to-b from-[#4a74b4] to-[#6089cc] text-black' : DARK)}>{o}</div>
    ))}
  </div>
);

const SmallLabels = ({ left, right, className }: { left: string; right: string; className: string }) => (
  <div className={clsx('grid grid-cols-2 text-[11px] whitespace-nowrap', className)}>
    <span className="pl-[6px]">{left}</span>
    <span className="pl-[10px]">{right}</span>
  </div>
);

function Properties() {
  return (
    <div className="relative flex min-h-0 flex-1 flex-col overflow-hidden bg-[#727272]">
      <div className="flex h-[22px] shrink-0 items-center border-b border-[#808080]">
        <Editor className="ml-2"><PropsIcon /></Editor>
        <div className={clsx('ml-[6px] flex h-[17px] shrink-0 divide-x divide-[#2d2d2d] overflow-hidden rounded-l-[4px]', BOX)}>
          {PROP_TABS.map((icon, i) => (
            <IconCell key={i} tone={i ? 'bg-linear-to-b from-[#515151] to-[#363636]' : 'bg-[#5680c2]'} className="w-[16.600px]">
              <span className={i ? 'opacity-75' : ''}>{icon}</span>
            </IconCell>
          ))}
        </div>
      </div>
      <Grip className="top-0 right-0" />
      <div className="w-[205px] pl-[7px]">
        <div className="w-[198px]">
          <div className="flex h-[28px] items-center gap-px pt-[2px]">
            <PinIcon />
            <SceneIcon />
            <span className="pt-[1px] pl-[2px]">Scene</span>
          </div>
          <Rule />
          <Title label="Render" className="h-[26px] pr-[1px] pb-[6px] pl-[3px]" />
          <div className={clsx('flex h-[17px] divide-x divide-[#2d2d2d] overflow-hidden rounded-[4px]', BOX)}>
            <div className={clsx('flex w-[65px] items-center', LIGHT)}><PhotoCam star /><span className="pt-[2px]">Render</span></div>
            <div className={clsx('flex w-[66px] items-center', LIGHT)}><Clapper /><span className="pt-[2px]">Animati</span></div>
            <div className={clsx('flex flex-1 items-center pl-px', LIGHT)}><SpeakerIcon /><span className="pt-[2px] pl-[4px]">Audio</span></div>
          </div>
          <div className="mt-1 mb-[5px] flex">
            <span className="w-[69px] pt-[3px] pl-[6px] text-[11px] leading-[14px]">Display:</span>
            <Select className="w-[112px] rounded-r-none">Image Editor</Select>
            <Btn className="w-[17px] rounded-l-none border-l-0 !p-0"><LockIcon open /></Btn>
          </div>
          <Rule />
          <Title label="Dimensions" className="h-[26px] pr-[1px] pb-[5px] pl-[3px]" />
          <div className="flex">
            <Select className="w-[165px] rounded-r-none">Render Presets</Select>
            <Btn className="w-[17px] rounded-none border-l-0 !p-0"><Plus /></Btn>
            <Btn className="w-[16px] rounded-l-none border-l-0 !p-0"><Minus /></Btn>
          </div>
          <SmallLabels left="Resolution:" right="Frame Range:" className="h-[21px] pt-[6px] leading-4" />
          <div className="flex justify-between">
            <NumStack className="h-[50px] w-[96px]">
              <Num label="X:" value="1920 px" />
              <Num label="Y:" value="1080 px" />
              <div className="flex flex-1 items-center justify-end bg-linear-to-r from-[#7c7c7c] from-53% to-[#adadad] to-53% pt-[2px] pr-[13px]">50%</div>
            </NumStack>
            <NumStack className="h-[50px] w-[96px]">
              <Num label="Start Fra:" value="1" />
              <Num label="End Fr:" value="250" />
              <Num label="Frame St:" value="1" />
            </NumStack>
          </div>
          <div className="flex h-[73px] justify-between">
            <div className="w-[96px]">
              <div className="h-[16px] pt-[2px] pl-[6px] text-[11px] leading-4">Aspect Ratio:</div>
              <NumStack className="h-[34px]">
                <Num label="X:" value="1.000" />
                <Num label="Y:" value="1.000" />
              </NumStack>
              <div className="flex h-[21px] items-center pl-[2px]">
                <Check label="Bor" className="w-[51px]" />
                <Check label="Cro" dim />
              </div>
            </div>
            <div className="w-[96px]">
              <div className="h-[16px] pt-[2px] pl-[6px] text-[11px] leading-4">Frame Rate:</div>
              <Select>24 fps</Select>
              <div className="h-[17px] pt-[1px] pl-[6px] text-[11px] leading-4 whitespace-nowrap">Time Remappi...</div>
              <div className={clsx('flex h-[17px] divide-x divide-[#2d2d2d] overflow-hidden rounded-full', BOX)}>
                <Num value="100" className="[&>span]:pr-[4px] [&>span]:pl-0" />
                <Num value="100" className="[&>span]:pr-[4px] [&>span]:pl-0" />
              </div>
            </div>
          </div>
          <Rule />
          <Title label="Anti-Aliasing" check="on" className="h-[26px] pr-[1px] pb-[6px] pl-[3px]" />
          <div className="flex justify-between">
            <Choice options={['5', '8', '11', '16']} active={1} className="w-[96px]" />
            <Select className="w-[96px] !pr-px">Mitchell-Ne...</Select>
          </div>
          <div className="mt-[2px] mb-[4px] flex items-center justify-between">
            <Check label="Full Sample" className="pl-[2px]" />
            <div className={clsx('flex h-[17px] w-[96px] overflow-hidden rounded-full', BOX)}>
              <Num label="Si:" value="1.000 px" className="[&>span]:pr-[3px] [&>span]:pl-[2px]" />
            </div>
          </div>
          <Rule />
          <Title label="Sampled Motion Blur" closed check="off" className="h-[18px] pt-[2px] pr-[1px] pl-[3px]" />
          {['Shading', 'Performance', 'Post Processing', 'Metadata'].map((label) => (
            <div key={label}>
              <Rule />
              <Title label={label} closed className="h-[18px] pt-[2px] pr-[1px] pl-[3px]" />
            </div>
          ))}
          <Rule />
          <Title label="Output" className="h-[27px] pr-[1px] pb-[6px] pl-[3px]" />
          <div className="flex">
            <div className={clsx('h-[17px] flex-1 rounded-l-[4px] pt-[2px] pl-[5px] leading-[15px]', FIELD, BOX)}>/tmp\</div>
            <Btn className="w-[17px] rounded-l-none border-l-0 !p-0"><FolderIcon /></Btn>
          </div>
          <div className="grid h-[43px] grid-cols-2 content-between pt-[4px] pb-[4px] pl-[2px] leading-[16px]">
            <Check label="Overwrite" on />
            <Check label="File Exten..." on className="pl-1" />
            <Check label="Placehold..." />
            <Check label="Cache Re..." className="pl-1" />
          </div>
          <div className="flex justify-between">
            <Select className="w-[96px] !pl-[2px]"><span className="-mt-[2px] -mr-px"><ImageIcon /></span>PNG</Select>
            <Choice options={['BW', 'RGB', 'RGB']} active={2} className="w-[96px]" />
          </div>
          <div className="mt-[1px] flex">
            <span className="w-[70px] pt-[3px] pl-[6px] text-[11px] leading-[14px] whitespace-nowrap">Color De...</span>
            <Choice options={['8', '16']} active={0} className="flex-1" />
          </div>
          <div className={clsx('mt-[2px] mb-[6px] flex h-[17px] items-center justify-between rounded-full bg-linear-to-r from-[#7c7c7c] from-18% to-[#adadad] to-18% pt-[2px] pr-[12px] pl-[12px]', BOX)}>
            <span>Compression:</span>
            <span>15%</span>
          </div>
          <Rule />
          <Title label="Bake" closed className="h-[18px] pt-[2px] pr-[1px] pl-[3px]" />
          <Rule />
          <Title label="Freestyle" closed check="off" className="h-[18px] pt-[2px] pr-[1px] pl-[3px]" />
        </div>
      </div>
      <GripLow />
    </div>
  );
}

export default function App() {
  return (
    <div className="flex h-[868px] w-[1600px] flex-col overflow-hidden bg-[#727272] font-['DejaVu_Sans',sans-serif] text-[12px] leading-none text-black">
      {/* Window title bar */}
      <div className="flex h-[19px] shrink-0 items-center bg-white font-['Open_Sans',sans-serif] text-[10.500px] tracking-[-0.6px]">
        <BlenderLogo className="ml-[2px] size-[14px]" />
        <span className="pl-[4px]">Blender</span>
        <svg viewBox="0 0 90 12" className="mr-[12px] ml-auto h-3 w-[90px]" fill="none" stroke="#444">
          <path d="M2 5.500h8M40.500 3.500h6v6h-6zM42.500 3.500v-2h6v6h-2M78 1.500l8 8M86 1.500l-8 8" />
        </svg>
      </div>
      <InfoHeader />
      <div className="flex min-h-0 flex-1">
        <div className="flex w-[1388px] shrink-0 flex-col">
          <div className="flex min-h-0 flex-1">
            <div className="flex w-[133px] shrink-0 flex-col">
              <ToolShelf />
              <OperatorPanel />
            </div>
            <Viewport />
          </div>
          <ViewHeader />
          <Timeline />
          <TimelineHeader />
        </div>
        <div className="flex min-w-0 flex-1 flex-col border-l border-[#161616]">
          <Outliner />
          <Properties />
        </div>
      </div>
    </div>
  );
}
